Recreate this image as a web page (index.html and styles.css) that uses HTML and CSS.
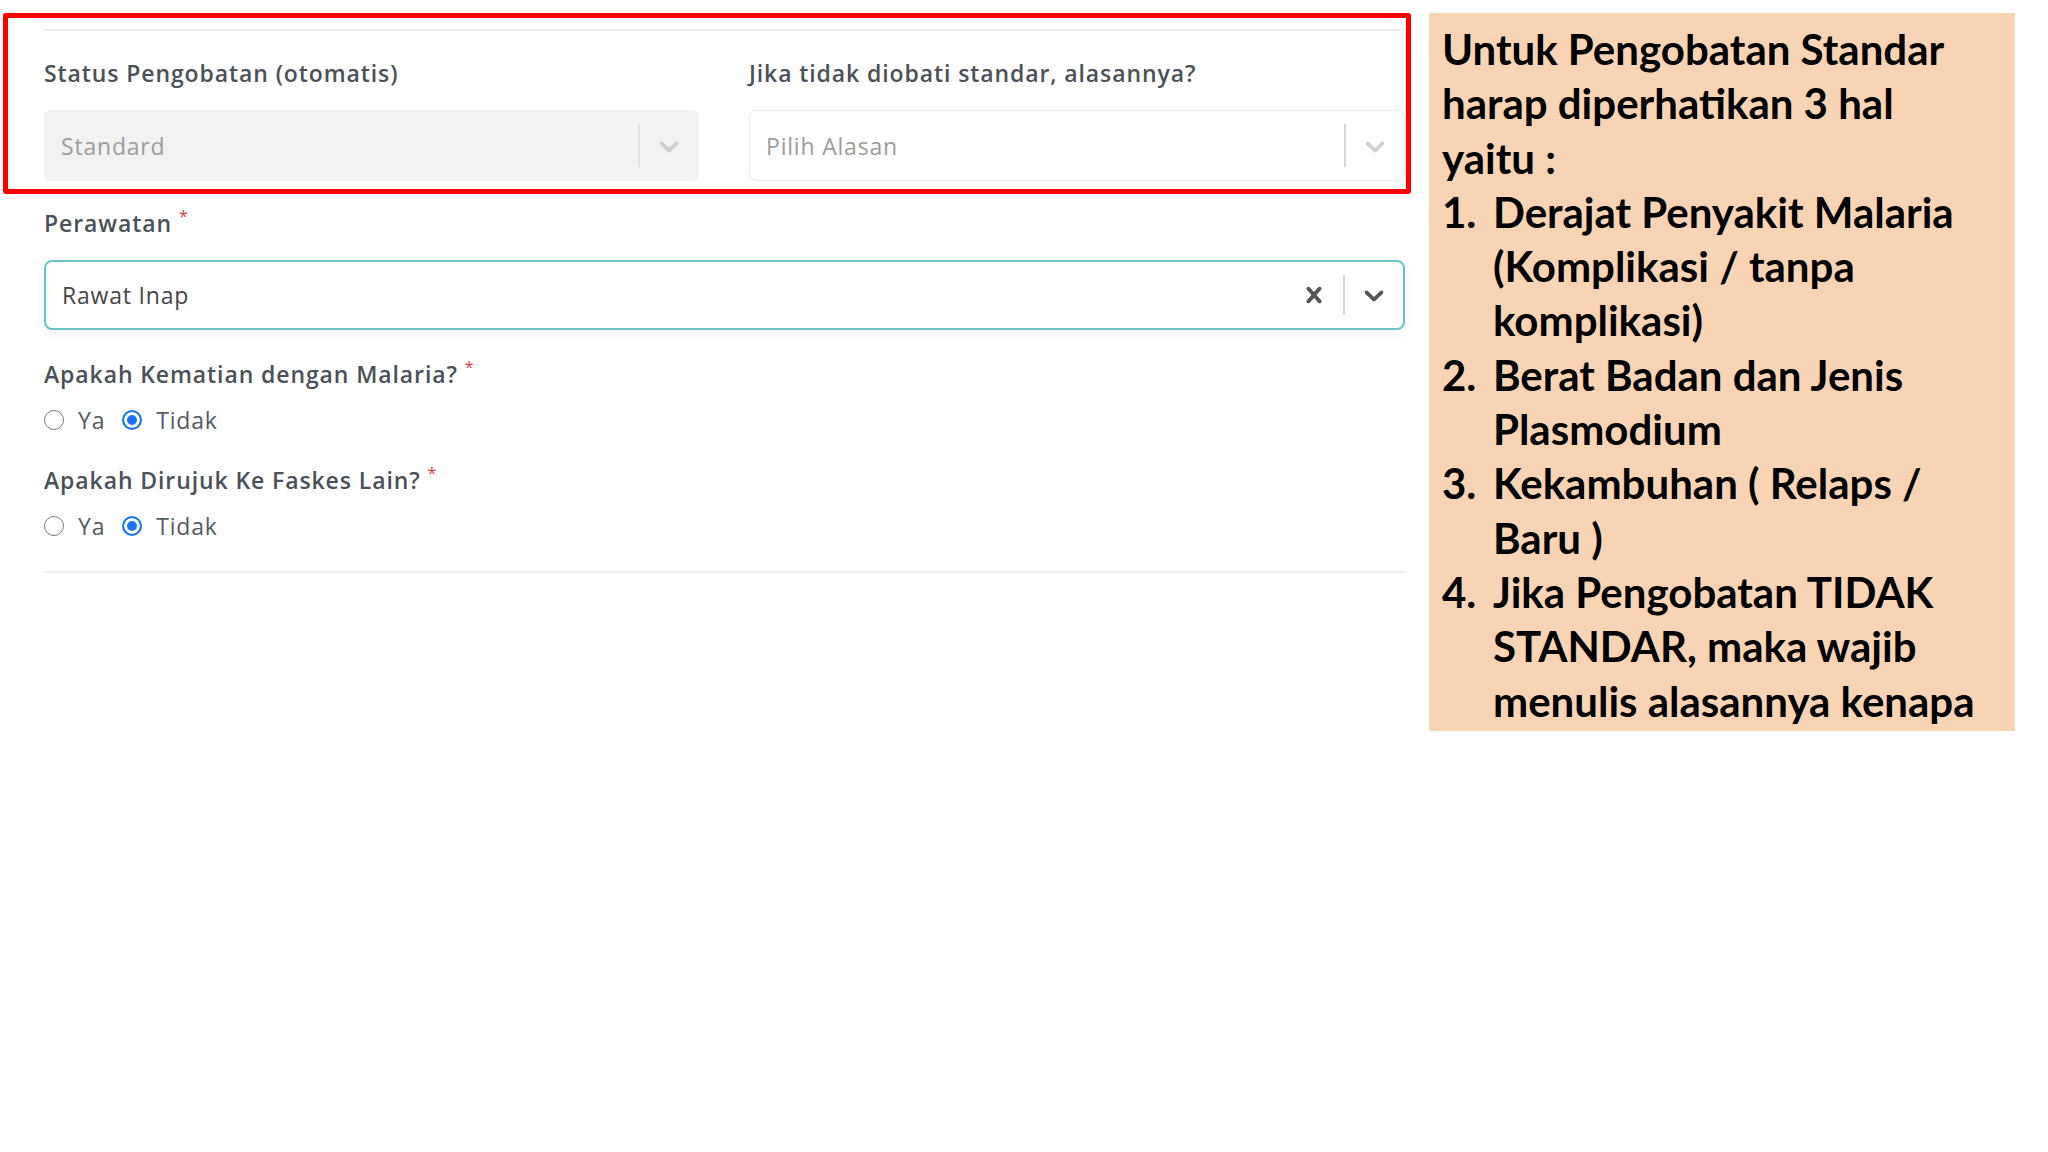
FILE: index.html
```html
<!DOCTYPE html>
<html lang="id">
<head>
<meta charset="utf-8">
<title>Form Pengobatan</title>
<link rel="stylesheet" href="styles.css">
</head>
<body>
<div class="page">
  <div class="form">
    <div class="divider"></div>
    <div class="row2">
      <div class="field">
        <div class="label">Status Pengobatan (otomatis)</div>
        <div class="select disabled">
          <div class="value placeholder">Standard</div>
          <div class="indicators">
            <span class="sep"></span>
            <span class="ind"><svg viewBox="0 0 20 20" class="ico light"><path d="M4.516 7.548c0.436-0.446 1.043-0.481 1.576 0l3.908 3.747 3.908-3.747c0.533-0.481 1.141-0.446 1.574 0 0.436 0.445 0.408 1.197 0 1.615-0.406 0.418-4.695 4.502-4.695 4.502-0.217 0.223-0.502 0.335-0.787 0.335s-0.57-0.112-0.789-0.335c0 0-4.287-4.084-4.695-4.502s-0.436-1.17 0-1.615z"/></svg></span>
          </div>
        </div>
      </div>
      <div class="field">
        <div class="label">Jika tidak diobati standar, alasannya?</div>
        <div class="select">
          <div class="value placeholder">Pilih Alasan</div>
          <div class="indicators">
            <span class="sep"></span>
            <span class="ind"><svg viewBox="0 0 20 20" class="ico light"><path d="M4.516 7.548c0.436-0.446 1.043-0.481 1.576 0l3.908 3.747 3.908-3.747c0.533-0.481 1.141-0.446 1.574 0 0.436 0.445 0.408 1.197 0 1.615-0.406 0.418-4.695 4.502-4.695 4.502-0.217 0.223-0.502 0.335-0.787 0.335s-0.57-0.112-0.789-0.335c0 0-4.287-4.084-4.695-4.502s-0.436-1.17 0-1.615z"/></svg></span>
          </div>
        </div>
      </div>
    </div>

    <div class="field f-perawatan">
      <div class="label">Perawatan<span class="req">*</span></div>
      <div class="select focused">
        <div class="value">Rawat Inap</div>
        <div class="indicators">
          <span class="ind"><svg viewBox="0 0 20 20" class="ico dark"><path d="M14.348 14.849c-0.469 0.469-1.229 0.469-1.697 0l-2.651-3.030-2.651 3.029c-0.469 0.469-1.229 0.469-1.697 0-0.469-0.469-0.469-1.229 0-1.697l2.758-3.15-2.759-3.152c-0.469-0.469-0.469-1.228 0-1.697s1.228-0.469 1.697 0l2.652 3.031 2.651-3.031c0.469-0.469 1.228-0.469 1.697 0s0.469 1.229 0 1.697l-2.758 3.152 2.758 3.150c0.469 0.469 0.469 1.229 0 1.698z"/></svg></span>
          <span class="sep"></span>
          <span class="ind"><svg viewBox="0 0 20 20" class="ico dark"><path d="M4.516 7.548c0.436-0.446 1.043-0.481 1.576 0l3.908 3.747 3.908-3.747c0.533-0.481 1.141-0.446 1.574 0 0.436 0.445 0.408 1.197 0 1.615-0.406 0.418-4.695 4.502-4.695 4.502-0.217 0.223-0.502 0.335-0.787 0.335s-0.57-0.112-0.789-0.335c0 0-4.287-4.084-4.695-4.502s-0.436-1.17 0-1.615z"/></svg></span>
        </div>
      </div>
    </div>

    <div class="field f-radio">
      <div class="label">Apakah Kematian dengan Malaria?<span class="req">*</span></div>
      <div class="radios">
        <span class="radio"></span><span class="rtext">Ya</span>
        <span class="radio checked"></span><span class="rtext">Tidak</span>
      </div>
    </div>

    <div class="field f-radio2">
      <div class="label">Apakah Dirujuk Ke Faskes Lain?<span class="req">*</span></div>
      <div class="radios">
        <span class="radio"></span><span class="rtext">Ya</span>
        <span class="radio checked"></span><span class="rtext">Tidak</span>
      </div>
    </div>

    <div class="divider bottom"></div>
  </div>

  <div class="note">
    <p class="intro">Untuk Pengobatan Standar<br>harap diperhatikan 3 hal<br>yaitu :</p>
    <ol class="points">
      <li><span class="num">1.</span><span class="txt">Derajat Penyakit Malaria<br>(Komplikasi / tanpa<br>komplikasi)</span></li>
      <li><span class="num">2.</span><span class="txt">Berat Badan dan Jenis<br>Plasmodium</span></li>
      <li><span class="num">3.</span><span class="txt">Kekambuhan ( Relaps /<br>Baru )</span></li>
      <li><span class="num">4.</span><span class="txt">Jika Pengobatan TIDAK<br>STANDAR, maka wajib<br>menulis alasannya kenapa</span></li>
    </ol>
  </div>
</div>
<div class="highlight"></div>
</body>
</html>
```

FILE: styles.css
```css
* { box-sizing: border-box; }

html, body {
  margin: 0;
  padding: 0;
  background: #ffffff;
}

body {
  position: relative;
  width: 2048px;
  height: 1152px;
  overflow: hidden;
  font-family: "Open Sans", "Noto Sans", sans-serif;
}

.page {
  display: flex;
  align-items: flex-start;
}

/* ---------- form ---------- */
.form {
  margin-left: 44px;
  width: 1361px;
  padding-top: 29px;
}

.divider {
  height: 2px;
  background: #eceef0;
}

.divider.bottom {
  margin-top: 29px;
}

.row2 {
  display: grid;
  grid-template-columns: 655px 656px;
  column-gap: 50px;
  margin-top: 26px;
}

.label {
  font-size: 23px;
  line-height: 32px;
  font-weight: 600;
  color: #4b5157;
  letter-spacing: 0.9px;
  white-space: nowrap;
}

.req {
  color: #e0393e;
  font-size: 16px;
  font-weight: 400;
  margin-left: 7px;
  position: relative;
  top: -10px;
}

.select {
  margin-top: 21px;
  height: 71px;
  border: 1.6px solid #ebebeb;
  border-radius: 7px;
  background: #ffffff;
  display: flex;
  align-items: center;
}

.select.disabled {
  background: #f2f2f2;
  border-color: #f0f0f0;
}

.select.focused {
  margin-top: 18px;
  height: 70px;
  border-color: #67c4c5;
  border-width: 2px;
  border-radius: 8px;
  box-shadow: 0 4px 12px rgba(0, 0, 0, 0.06);
}

.value {
  flex: 1;
  padding-left: 16px;
  font-size: 23px;
  color: #454545;
  letter-spacing: 0.8px;
  white-space: nowrap;
}

.value.placeholder {
  color: #9c9c9c;
}

.indicators {
  display: flex;
  align-items: center;
  align-self: stretch;
}

.sep {
  width: 1.6px;
  align-self: stretch;
  margin: 13px 0;
  background: #d6d6d6;
}

.disabled .sep { background: #e2e2e2; }

.ind {
  width: 58px;
  display: flex;
  align-items: center;
  justify-content: center;
}

.ico {
  width: 32px;
  height: 32px;
}

.ico.light { fill: #cfcfcf; }
.ico.dark { fill: #555555; }

.f-perawatan { margin-top: 26px; }

.f-radio { margin-top: 28px; }
.f-radio2 { margin-top: 28px; }

.radios {
  margin-top: 11px;
  height: 32px;
  display: flex;
  align-items: center;
}

.radio {
  width: 20px;
  height: 20px;
  border-radius: 50%;
  border: 1.8px solid #7b7b7b;
  background: #fff;
  flex: none;
}

.radio.checked {
  border: 2px solid #1a76f2;
  background: #1a76f2;
  box-shadow: inset 0 0 0 3px #ffffff;
}

.rtext {
  font-size: 23px;
  line-height: 32px;
  color: #555a60;
  letter-spacing: 0.8px;
  margin-left: 14px;
  margin-right: 17px;
}

/* ---------- note ---------- */
.note {
  margin-left: 24px;
  margin-top: 13px;
  width: 586px;
  height: 718px;
  background: #f9d4b4;
  padding: 9px 0 0 13px;
  font-family: "Lato", "Carlito", "Open Sans", sans-serif;
  font-weight: 700;
  font-size: 42px;
  line-height: 54.3px;
  color: #000000;
}

.intro {
  margin: 0;
  white-space: nowrap;
}

.points {
  list-style: none;
  margin: 0;
  padding: 0;
}

.points li {
  display: flex;
  white-space: nowrap;
}

.num {
  width: 51px;
  flex: none;
}

/* ---------- annotation overlay ---------- */
.highlight {
  position: absolute;
  left: 3px;
  top: 13px;
  width: 1408px;
  height: 181px;
  border: 5px solid #fe0000;
  border-radius: 3px;
  pointer-events: none;
}
```
